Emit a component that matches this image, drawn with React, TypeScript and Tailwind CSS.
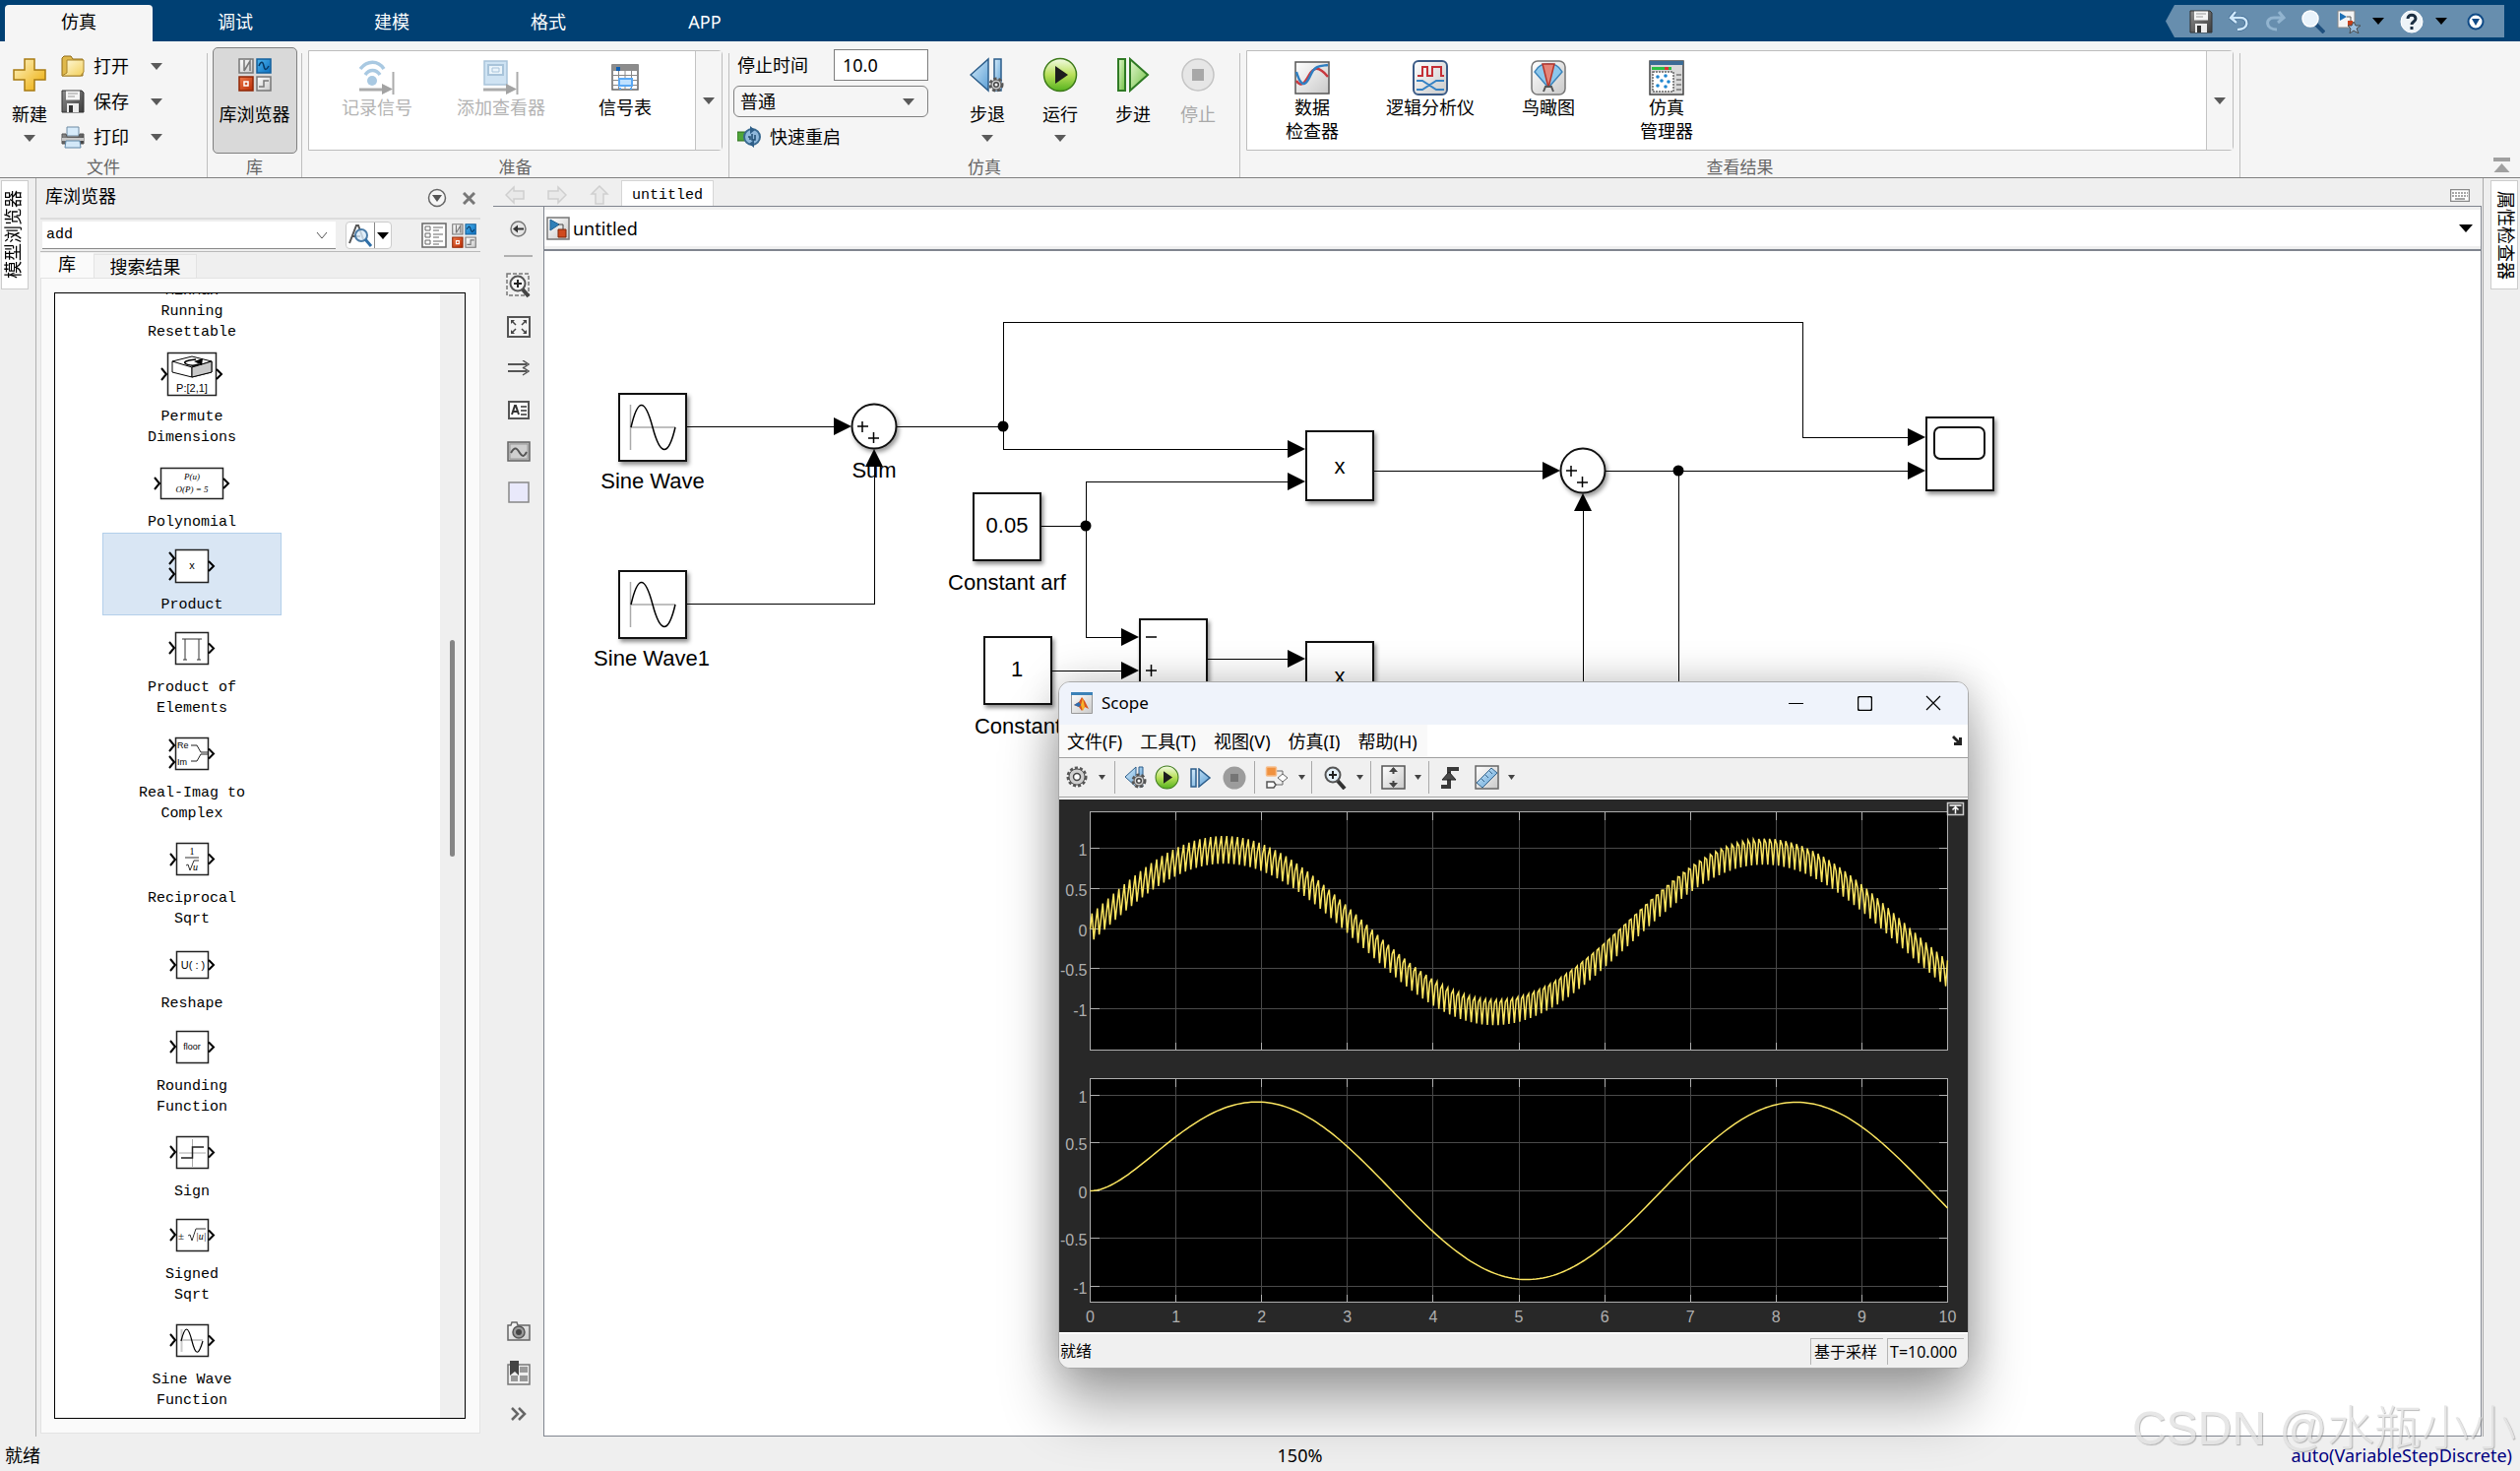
import React from "react";

const UI = "font-['Noto_Sans','Noto_Sans_CJK_SC',sans-serif]";
const SONG = "font-['Liberation_Mono','Noto_Sans_CJK_SC',monospace]";

/* ---------- shared gradients ---------- */

function Gradients() {
  const g = (id: string, a: string, b: string) => (
    <linearGradient id={id} x1="0" y1="0" x2="1" y2="1">
      <stop offset="0" stopColor={a} />
      <stop offset="1" stopColor={b} />
    </linearGradient>
  );
  return (
    <svg width="0" height="0" className="absolute" aria-hidden="true">
      <defs>
        {g("gold", "#fff6c8", "#eba900")}
        {g("folder", "#fffbe0", "#f3cf5a")}
        {g("steel", "#8d8d8d", "#3c3c3c")}
        {g("paper", "#ffffff", "#c9c9c9")}
        {g("sky", "#d5ecfa", "#5c9fd6")}
        {g("leaf", "#e4f8cf", "#6fbf42")}
        {g("red", "#ef7a4a", "#b92d06")}
        {g("blue", "#4bb4ee", "#0c6fc0")}
        <linearGradient id="run" x1="0" y1="0" x2="0" y2="1">
          <stop offset="0" stopColor="#f3fbe6" />
          <stop offset="0.5" stopColor="#b9e05a" />
          <stop offset="1" stopColor="#55b21e" />
        </linearGradient>
      </defs>
    </svg>
  );
}

type IconProps = { w: number; h: number; vb?: string; children: React.ReactNode };
function Icon({ w, h, vb, children }: IconProps) {
  return (
    <svg width={w} height={h} viewBox={vb ?? `0 0 ${w} ${h}`} fill="none" className="block shrink-0" aria-hidden="true">
      {children}
    </svg>
  );
}

function Caret({ color = "#5a5a5a" }: { color?: string }) {
  return (
    <Icon w={12} h={7}>
      <path d="M0 0h12l-6 7z" fill={color} />
    </Icon>
  );
}

function SmallCaret() {
  return (
    <Icon w={7} h={5}>
      <path d="M0 0h7l-3.500 5z" fill="#444" />
    </Icon>
  );
}

/* ---------- icons ---------- */

const PlusIcon = () => (
  <Icon w={34} h={34}>
    <path d="M12 1h10v11h11v10H22v11H12V22H1V12h11z" fill="url(#gold)" stroke="#a87b12" strokeWidth="1.500" />
  </Icon>
);
const FolderIcon = () => (
  <Icon w={24} h={22}>
    <path d="M1 21V3l2-2h7l2 3h10v17z" fill="#e0b94c" stroke="#8f6b14" />
    <path d="M1 21l5-3V5h17v12l-3 4z" fill="url(#folder)" stroke="#a8842a" />
  </Icon>
);
const FloppyIcon = () => (
  <Icon w={24} h={24}>
    <path d="M1 1h20l2 2v20H1z" fill="url(#steel)" stroke="#333" />
    <path d="M5 1.500h14v9H5z" fill="#f5f5f5" />
    <path d="M7 4h10M7 7h7" stroke="#999" />
    <path d="M6 14h12v9H6z" fill="#ececec" />
    <path d="M8 16h4v7H8z" fill="#333" />
  </Icon>
);
const PrinterIcon = () => (
  <Icon w={24} h={23}>
    <path d="M6 1h12v9H6z" fill="#d7ebfa" stroke="#6e8ba3" />
    <path d="M1 8h4l1 3h12l1-3h4v10H1z" fill="url(#steel)" stroke="#555" />
    <path d="M1 12h22v3H1z" fill="#c8c8c8" />
    <path d="M5 15h14l1 7H4z" fill="#d3e8f8" stroke="#5f87a8" />
  </Icon>
);
const LibraryIcon = ({ size = 34 }: { size?: number }) => (
  <Icon w={size} h={size} vb="0 0 34 34">
    <path d="M1 1h14v14H1z" fill="url(#paper)" stroke="#777" strokeWidth="1.500" />
    <path d="M6 2v11M6 13L12 3v10" stroke="#777" strokeWidth="1.500" />
    <path d="M19 1h14v14H19z" fill="url(#blue)" stroke="#14609c" strokeWidth="1.500" />
    <path d="M21 8c2-5 4-5 5 0s3 4 5 0" stroke="#083a66" strokeWidth="1.500" />
    <path d="M1 19h14v14H1z" fill="url(#red)" stroke="#8f2606" strokeWidth="1.500" />
    <path d="M6 24h4v4H6z" stroke="#fff" strokeWidth="1.500" />
    <path d="M19 19h14v14H19z" fill="url(#paper)" stroke="#777" strokeWidth="1.500" />
    <path d="M21 29h5v-6h5" stroke="#777" strokeWidth="1.500" />
  </Icon>
);
const RecordIcon = () => (
  <Icon w={36} h={36}>
    <g stroke="#a9c9e2" strokeWidth="3.500">
      <path d="M1 9c7-9 18-9 24 0" />
      <path d="M6 15c4-6 11-6 15 0" />
    </g>
    <circle cx="13" cy="21" r="5" fill="#a9c9e2" />
    <path d="M0 30h26" stroke="#ababab" strokeWidth="3" />
    <path d="M23 24v11l11-5.500z" fill="#a3a3a3" />
    <path d="M34.500 12v23" stroke="#ababab" strokeWidth="2" />
  </Icon>
);
const ViewerIcon = () => (
  <Icon w={36} h={36}>
    <path d="M1 1h23v24H1z" fill="#cfe3f3" stroke="#a9c4da" strokeWidth="1.500" />
    <path d="M5 5h15v10H5z" fill="#eaf4fb" stroke="#a9c4da" strokeWidth="2" />
    <path d="M9 8h7v4H9z" stroke="#a9c4da" />
    <path d="M0 30h26" stroke="#ababab" strokeWidth="3" />
    <path d="M23 24v11l11-5.500z" fill="#a3a3a3" />
    <path d="M34.500 12v23" stroke="#ababab" strokeWidth="2" />
  </Icon>
);
const SignalTableIcon = () => (
  <Icon w={28} h={36}>
    <path d="M1 5h26v25H1z" fill="#fff" stroke="#666" strokeWidth="1.500" />
    <path d="M1 5h26v6H1z" fill="#8c8c8c" />
    <path d="M5 7h4v4H5z" fill="#0d5fb4" />
    <path d="M1 15.500h26M1 20.500h26M1 25.500h26M7.500 11v19M14 11v19M20.500 11v19" stroke="#888" />
    <path d="M8 19h13v7H8z" fill="#bfe1ff" stroke="#5aa9f5" strokeWidth="2" />
    <path d="M8 29h2M19 29h2" stroke="#5aa9f5" strokeWidth="2" />
  </Icon>
);
const RestartIcon = () => (
  <Icon w={26} h={22}>
    <path d="M0 6h10v9H0z" fill="#4fa53a" stroke="#2d6e1e" />
    <circle cx="15" cy="11" r="8" fill="#8fb9dc" stroke="#37688f" strokeWidth="2" />
    <path d="M13 0l5 4-5 4zM17 14l-5 4 5 4z" fill="#2f5f88" />
    <path d="M11 11h2v3M15 8v6h3V9" stroke="#1f4c70" strokeWidth="1.500" />
  </Icon>
);
const Gear = ({ x, y, r }: { x: number; y: number; r: number }) => (
  <g>
    <circle cx={x} cy={y} r={r} stroke="#555" strokeWidth="3" strokeDasharray="3 2" fill="#ccc" />
    <circle cx={x} cy={y} r={r - 1} fill="#cfcfcf" stroke="#555" strokeWidth="1" />
    <circle cx={x} cy={y} r={r / 2.6} fill="#fff" stroke="#444" strokeWidth="1.500" />
  </g>
);
const StepBackIcon = () => (
  <Icon w={36} h={36}>
    <path d="M19 2v32L1 18z" fill="url(#sky)" stroke="#2c5d8a" strokeWidth="1.500" />
    <path d="M25 2h7v32h-7z" fill="url(#sky)" stroke="#2c5d8a" strokeWidth="1.500" />
    <Gear x={27} y={28} r={6} />
  </Icon>
);
const RunIcon = ({ size = 36 }: { size?: number }) => (
  <Icon w={size} h={size} vb="0 0 36 36">
    <circle cx="18" cy="18" r="16.500" fill="url(#run)" stroke="#3d7a1a" strokeWidth="1.500" />
    <path d="M13 9v18l13-9z" fill="#1d1d1d" />
  </Icon>
);
const StepForwardIcon = () => (
  <Icon w={36} h={36}>
    <path d="M3 2h7v32H3z" fill="url(#leaf)" stroke="#2f7a24" strokeWidth="2" />
    <path d="M15 2v32l18-16z" fill="url(#leaf)" stroke="#2f7a24" strokeWidth="2" />
  </Icon>
);
const StopIcon = () => (
  <Icon w={36} h={36}>
    <circle cx="18" cy="18" r="16" fill="#e6e6e6" stroke="#c4c4c4" strokeWidth="1.500" />
    <path d="M12 12h12v12H12z" fill="#a8a8a8" />
  </Icon>
);
const InspectorIcon = () => (
  <Icon w={36} h={36}>
    <path d="M1 2h34v32H1z" fill="url(#paper)" stroke="#555" strokeWidth="1.500" />
    <path d="M2 21c5 8 9 1 13-6s9-10 19 2" stroke="#c8393f" strokeWidth="2.500" />
    <path d="M2 12c6 20 11 11 15 2s10-8 17-9" stroke="#2f7fc2" strokeWidth="2.500" />
  </Icon>
);
const LogicIcon = () => (
  <Icon w={36} h={36}>
    <rect x="1" y="1" width="34" height="34" rx="5" fill="url(#paper)" stroke="#3a5a86" strokeWidth="2" />
    <path d="M5 16h5V7h5v9h5V7h9v9h3" stroke="#c42f36" strokeWidth="2" />
    <path d="M4 21h6l14 9h8M4 30h6l14-9h8" stroke="#3582c4" strokeWidth="2" />
  </Icon>
);
const BirdIcon = () => (
  <Icon w={36} h={36}>
    <rect x="1" y="1" width="34" height="34" rx="6" fill="url(#paper)" stroke="#777" strokeWidth="1.500" />
    <path d="M18 28L4 12c4-7 8-8 14-8s10 1 14 8z" fill="#8cc7ec" stroke="#3a83ba" strokeWidth="1.500" />
    <path d="M18 28L12 4h12z" fill="#e58478" stroke="#b5352a" strokeWidth="1.500" />
    <path d="M13 32l2-5h6l2 5" stroke="#555" strokeWidth="2" fill="#ddd" />
  </Icon>
);
const ManagerIcon = () => (
  <Icon w={36} h={36}>
    <path d="M1 1h34v34H1z" fill="#d9d9d9" stroke="#444" strokeWidth="1.500" />
    <path d="M1 1h34v4H1z" fill="#3b6c96" />
    <path d="M3 7h20v3H3z" fill="#2cbf45" />
    <path d="M16 7h4v3h-4z" fill="#d33" />
    <path d="M4 12h21v20H4z" fill="#fff" stroke="#666" strokeWidth="1.500" strokeDasharray="2 1" />
    <g fill="#1f86cf">
      <circle cx="9" cy="17" r="1.800" /><circle cx="17" cy="16" r="1.800" /><circle cx="13" cy="21" r="1.800" />
      <circle cx="20" cy="22" r="1.800" /><circle cx="9" cy="26" r="1.800" /><circle cx="17" cy="27" r="1.800" />
    </g>
    <path d="M28 15h5M28 20h5M28 25h5M28 30h5" stroke="#777" strokeWidth="1.500" />
  </Icon>
);

/* ---------- header ---------- */

function Header() {
  return (
    <header className="flex h-[42px] shrink-0 items-end bg-[#004073] pl-[5px]">
      <nav className="flex gap-[9px] text-lg">
        <button className="h-[37px] w-[150px] rounded-t bg-[#f5f5f5] pb-[3px] text-black">仿真</button>
        {["调试", "建模", "格式", "APP"].map((t) => (
          <button key={t} className="h-[37px] w-[150px] pb-[3px] text-white">
            {t}
          </button>
        ))}
      </nav>
      <div className="mr-4 mb-1 ml-auto flex h-[33px] items-center bg-[#678eae] pr-5 pl-6 [clip-path:polygon(9px_0,100%_0,100%_100%,9px_100%,0_50%)]">
        <button aria-label="Save" className="mr-4"><FloppyIcon /></button>
        <button aria-label="Undo" className="mr-4">
          <Icon w={21} h={21}>
            <path d="M7 1L2 7l6 5M3 7h9c9 0 9 12-3 12" stroke="#3f6a92" strokeWidth="4" />
            <path d="M7 1L2 7l6 5M3 7h9c9 0 9 12-3 12" stroke="#cfe8fb" strokeWidth="2.500" />
          </Icon>
        </button>
        <button aria-label="Redo" className="mr-4">
          <Icon w={21} h={21}>
            <path d="M14 1l5 6-6 5M18 7H9c-9 0-9 12 3 12" stroke="#92b4cf" strokeWidth="3" />
          </Icon>
        </button>
        <button aria-label="Find" className="mr-3">
          <Icon w={24} h={24}>
            <path d="M14 14l9 9" stroke="#1e4f7d" strokeWidth="4" />
            <circle cx="9" cy="9" r="8" fill="#e9f3fb" stroke="#fff" strokeWidth="1.500" />
          </Icon>
        </button>
        <button aria-label="Favorites" className="mr-3 flex items-center gap-3">
          <Icon w={24} h={24}>
            <path d="M1 1h17v17H1z" fill="#f4f4f4" stroke="#888" />
            <path d="M3 3l7 4-7 4z" fill="#1d6fb5" />
            <path d="M10 7h4v5" stroke="#555" />
            <path d="M11 11h5v6h-5z" fill="#c8401a" />
            <path d="M17 12l2 4h5l-4 3 2 5-5-3-4 3 1-5-3-3h4z" fill="#9cc0e0" stroke="#4b4b4b" />
          </Icon>
          <Caret color="#000" />
        </button>
        <button aria-label="Help" className="mr-5 ml-1 flex items-center gap-3">
          <Icon w={24} h={24}>
            <circle cx="12" cy="12" r="11" fill="#eef4f8" stroke="#fff" />
            <path d="M8 9c0-5 8-5 8 0 0 3-4 3-4 6M12 17v3" stroke="#1c2f42" strokeWidth="3" />
          </Icon>
          <Caret color="#000" />
        </button>
        <button aria-label="More">
          <Icon w={18} h={18}>
            <circle cx="9" cy="9" r="7.500" fill="#fff" stroke="#0f4a86" strokeWidth="2" />
            <path d="M5 6h8l-4 7z" fill="#0f4a86" />
          </Icon>
        </button>
      </div>
    </header>
  );
}

/* ---------- ribbon ---------- */

function Separator() {
  return <div className="h-[126px] w-px shrink-0 self-end bg-[#bfbfbf]" />;
}

function Group({ label, className, children }: { label: string; className: string; children: React.ReactNode }) {
  return (
    <section className={`flex shrink-0 flex-col ${className}`}>
      <div className="flex h-[117px]">{children}</div>
      <h2 className="text-center text-[17px] leading-[21px] text-[#666]">{label}</h2>
    </section>
  );
}

function FileRow({ icon, label }: { icon: React.ReactNode; label: string }) {
  return (
    <button className="flex h-9 items-center text-lg">
      {icon}
      <span className="ml-[9px]">{label}</span>
      <span className="ml-[22px]"><Caret /></span>
    </button>
  );
}

function BigButton({ icon, label, caret, muted }: { icon: React.ReactNode; label: string; caret?: boolean; muted?: boolean }) {
  return (
    <button className={`flex flex-col items-center pt-4 text-lg leading-6 ${muted ? "w-[58px] text-[#a9a9a9]" : "w-[74px]"}`}>
      {icon}
      <span className="mt-2.5">{label}</span>
      {caret && <span className="mt-[9px]"><Caret /></span>}
    </button>
  );
}

function GalleryItem({ icon, lines, muted, wide }: { icon: React.ReactNode; lines: string[]; muted?: boolean; wide?: boolean }) {
  return (
    <button className={`flex flex-col items-center pt-[9px] text-lg leading-6 ${wide ? "w-[126px]" : "w-[120px]"} ${muted ? "text-[#b3b3b3]" : ""}`}>
      {icon}
      <span className="flex flex-col whitespace-nowrap">
        {lines.map((l) => <span key={l}>{l}</span>)}
      </span>
    </button>
  );
}

function Gallery({ width, children }: { width: string; children: React.ReactNode }) {
  return (
    <div className={`mt-[9px] flex h-[102px] rounded-r border border-[#bdbdbd] bg-white ${width}`}>
      <div className="flex flex-1 items-start pl-[6px]">{children}</div>
      <button aria-label="More items" className="flex w-[27px] items-center justify-center border-l border-[#c3c3c3] bg-[#f5f5f5]">
        <Caret />
      </button>
    </div>
  );
}

function Ribbon() {
  return (
    <div className="flex h-[139px] shrink-0 border-b border-[#808080] bg-[#f5f5f5]">
      <Group label="文件" className="w-[210px]">
        <button className="flex w-[60px] flex-col items-center pt-[17px] text-lg leading-6">
          <PlusIcon />
          <span className="mt-[11px]">新建</span>
          <span className="mt-[9px]"><Caret /></span>
        </button>
        <div className="ml-0.5 flex flex-col pt-[7px]">
          <FileRow icon={<FolderIcon />} label="打开" />
          <FileRow icon={<FloppyIcon />} label="保存" />
          <FileRow icon={<PrinterIcon />} label="打印" />
        </div>
      </Group>
      <Separator />
      <Group label="库" className="w-[95px] items-center">
        <button className="mt-[6px] flex h-[108px] w-[86px] flex-col items-center rounded-[5px] border border-[#808080] bg-[#d9d9d9] pt-2.5 text-lg leading-6">
          <LibraryIcon />
          <span className="mt-[11px]">库浏览器</span>
        </button>
      </Group>
      <Separator />
      <Group label="准备" className="w-[433px] items-center">
        <Gallery width="w-[421px]">
          <GalleryItem wide muted icon={<RecordIcon />} lines={["记录信号"]} />
          <GalleryItem wide muted icon={<ViewerIcon />} lines={["添加查看器"]} />
          <GalleryItem wide icon={<SignalTableIcon />} lines={["信号表"]} />
        </Gallery>
      </Group>
      <Separator />
      <Group label="仿真" className="w-[518px]">
        <div className="ml-1 flex w-[198px] flex-col pt-2">
          <div className="flex h-8 items-center justify-between pl-1 text-lg">
            <label htmlFor="stop-time">停止时间</label>
            <input id="stop-time" defaultValue="10.0" className="h-8 w-24 border border-[#7d7d7d] bg-white px-2" />
          </div>
          <div className="mt-[5px] flex h-8 items-center rounded-md border border-[#808080] pr-[13px]">
            <select aria-label="Simulation mode" className="h-full flex-1 appearance-none bg-transparent pl-1.5 text-lg">
              <option>普通</option>
            </select>
            <Caret />
          </div>
          <button className="mt-2 flex h-6 items-center gap-[7px] pl-1 text-lg leading-6">
            <RestartIcon />
            快速重启
          </button>
        </div>
        <div className="ml-[23px] flex">
          <BigButton icon={<StepBackIcon />} label="步退" caret />
          <BigButton icon={<RunIcon />} label="运行" caret />
          <BigButton icon={<StepForwardIcon />} label="步进" />
          <BigButton icon={<StopIcon />} label="停止" muted />
        </div>
      </Group>
      <Separator />
      <Group label="查看结果" className="w-[1015px] items-center">
        <Gallery width="w-[1003px]">
          <GalleryItem icon={<InspectorIcon />} lines={["数据", "检查器"]} />
          <GalleryItem icon={<LogicIcon />} lines={["逻辑分析仪"]} />
          <GalleryItem icon={<BirdIcon />} lines={["鸟瞰图"]} />
          <GalleryItem icon={<ManagerIcon />} lines={["仿真", "管理器"]} />
        </Gallery>
      </Group>
      <Separator />
      <button aria-label="Collapse ribbon" className="mr-2.5 mb-1 ml-auto self-end">
        <Icon w={17} h={17}>
          <path d="M0 1h17v4H0z" fill="#a0a0a0" />
          <path d="M8.500 7l8 9H.5z" fill="#a0a0a0" />
        </Icon>
      </button>
    </div>
  );
}

/* ---------- library panel ---------- */

type BlockGlyph = { w: number; h: number; ports: number[]; body: React.ReactNode };
type LibraryItem = { lines: string[]; glyph: BlockGlyph; selected?: boolean };

const sqrtText = "font-['Liberation_Serif',serif] italic";

const libraryItems: LibraryItem[] = [
  { lines: ["MinMax", "Running", "Resettable"], glyph: { w: 34, h: 32, ports: [16], body: null } },
  {
    lines: ["Permute", "Dimensions"],
    glyph: {
      w: 50, h: 44, ports: [22],
      body: (
        <>
          <path d="M5 9l20-5 20 5v11L25 25 5 20zM5 9l20 6 20-6M25 15v10" stroke="#000" />
          <path d="M25 15l20-6v11l-20 5z" fill="#c8c8c8" stroke="#000" />
          <path d="M32 12c-8 3-18-1-13-3s6-1 10-2" stroke="#000" strokeWidth="1.500" />
          <path d="M27 9l9-3-1 7z" fill="#000" />
          <text x="25" y="40" fontSize="11" textAnchor="middle" fill="#000" className="font-['Liberation_Sans',sans-serif]">P:[2,1]</text>
        </>
      ),
    },
  },
  {
    lines: ["Polynomial"],
    glyph: {
      w: 64, h: 32, ports: [16],
      body: (
        <>
          <text x="32" y="12" fontSize="9" textAnchor="middle" fill="#000" className={sqrtText}>P(u)</text>
          <text x="32" y="25" fontSize="9" textAnchor="middle" fill="#000" className={sqrtText}>O(P) = 5</text>
        </>
      ),
    },
  },
  {
    lines: ["Product"],
    selected: true,
    glyph: {
      w: 34, h: 34, ports: [9, 25],
      body: <text x="17" y="20" fontSize="11" textAnchor="middle" fill="#000" className="font-['Liberation_Sans',sans-serif]">x</text>,
    },
  },
  {
    lines: ["Product of", "Elements"],
    glyph: { w: 34, h: 33, ports: [16], body: <path d="M7 7h20M10 7v21M24 7v21M8 28h4M22 28h4" stroke="#333" /> },
  },
  {
    lines: ["Real-Imag to", "Complex"],
    glyph: {
      w: 34, h: 33, ports: [8, 25],
      body: (
        <>
          <text x="2" y="11" fontSize="9" fill="#000" className="font-['Liberation_Sans',sans-serif]">Re</text>
          <text x="2" y="28" fontSize="9" fill="#000" className="font-['Liberation_Sans',sans-serif]">Im</text>
          <path d="M16 8h6l4 7h7M16 24h6l4-7h7" stroke="#222" />
        </>
      ),
    },
  },
  {
    lines: ["Reciprocal", "Sqrt"],
    glyph: {
      w: 33, h: 33, ports: [17],
      body: (
        <>
          <text x="16" y="12" fontSize="10" textAnchor="middle" fill="#000" className="font-['Liberation_Serif',serif]">1</text>
          <path d="M9 15h14M10 23l2-1 2 6 4-10h5" stroke="#333" />
          <text x="17" y="28" fontSize="10" fill="#000" className={sqrtText}>u</text>
        </>
      ),
    },
  },
  {
    lines: ["Reshape"],
    glyph: {
      w: 33, h: 28, ports: [14],
      body: <text x="17" y="18" fontSize="11" textAnchor="middle" fill="#000" className="font-['Liberation_Sans',sans-serif]">U( : )</text>,
    },
  },
  {
    lines: ["Rounding", "Function"],
    glyph: {
      w: 33, h: 33, ports: [16],
      body: <text x="16" y="19" fontSize="9" textAnchor="middle" fill="#000" className="font-['Liberation_Sans',sans-serif]">floor</text>,
    },
  },
  {
    lines: ["Sign"],
    glyph: {
      w: 33, h: 33, ports: [16],
      body: (
        <>
          <path d="M3 17h27M16.500 3v28" stroke="#aaa" />
          <path d="M5 22h11.500V11H28" stroke="#222" strokeWidth="1.500" />
        </>
      ),
    },
  },
  {
    lines: ["Signed", "Sqrt"],
    glyph: {
      w: 33, h: 33, ports: [16],
      body: (
        <>
          <text x="2" y="21" fontSize="11" fill="#000" className="font-['Liberation_Serif',serif]">±</text>
          <path d="M12 17l2-1 2 6 4-12h10" stroke="#333" />
          <text x="20" y="21" fontSize="10" fill="#000" className={sqrtText}>|u|</text>
        </>
      ),
    },
  },
  {
    lines: ["Sine Wave", "Function"],
    glyph: {
      w: 33, h: 33, ports: [16],
      body: (
        <>
          <path d="M5.500 5v23M4 16h23" stroke="#ccc" strokeWidth="2" />
          <path d="M5 17C9 1 12 1 16 17s7 14 11 0" stroke="#000" strokeWidth="1.200" />
        </>
      ),
    },
  },
];

function LibraryGlyph({ glyph }: { glyph: BlockGlyph }) {
  const { w, h, ports, body } = glyph;
  const out = h / 2;
  return (
    <svg width={w + 14} height={h + 2} viewBox={`-7 -1 ${w + 14} ${h + 2}`} fill="none" className="block" aria-hidden="true">
      <rect x="0.500" y="0.500" width={w - 1} height={h - 1} fill="#fff" stroke="#222" strokeWidth="1.500" />
      {ports.map((p) => (
        <path key={p} d={`M-6 ${p - 6}l5 6-5 6`} stroke="#000" strokeWidth="2" />
      ))}
      <path d={`M${w} ${out - 5}l5 5-5 5`} stroke="#000" strokeWidth="2" />
      {body}
    </svg>
  );
}

function LibraryEntry({ item }: { item: LibraryItem }) {
  return (
    <li className="w-[182px]">
      <button
        className={`flex w-full flex-col items-center text-[15px] leading-[21px] ${item.selected ? "bg-[#d9e6f4] outline-1 -outline-offset-1 outline-[#b3cfea]" : ""}`}
      >
        <span className={`flex h-[63px] items-center ${item.glyph.h > 40 ? "pb-1" : "pt-1"}`}>
          <LibraryGlyph glyph={item.glyph} />
        </span>
        {item.lines.map((l) => <span key={l}>{l}</span>)}
        {item.lines.length > 1 && <span className="h-0.5" />}
      </button>
    </li>
  );
}

function LibraryPanel() {
  return (
    <aside className={`flex w-[464px] shrink-0 flex-col pr-[13px] pb-[3px] pl-1 text-lg ${SONG}`}>
      <div className="flex h-10 items-center pl-[5px]">
        <h2 className="mr-auto">库浏览器</h2>
        <button aria-label="Panel menu" className="mr-4">
          <Icon w={20} h={20}>
            <circle cx="10" cy="10" r="8.500" stroke="#666" strokeWidth="1.500" fill="#f6f6f6" />
            <path d="M5 7h10l-5 7z" fill="#555" />
          </Icon>
        </button>
        <button aria-label="Close panel" className="mr-[5px]">
          <Icon w={13} h={13}>
            <path d="M1 1l11 11M12 1L1 12" stroke="#777" strokeWidth="3" />
          </Icon>
        </button>
      </div>
      <div className="flex h-[35px] items-center border-t-2 border-b border-[#dcdcdc] border-b-[#b9b9b9] pl-[2px]">
        <div className="flex h-[28px] flex-1 items-center border-b border-[#888] bg-white pt-px pr-2">
          <input aria-label="Search library" defaultValue="add" className="w-full min-w-0 flex-1 bg-transparent pl-1 text-[15px]" />
          <button aria-label="Search history">
            <Icon w={12} h={8}>
              <path d="M1 1l5 6 5-6" stroke="#555" />
            </Icon>
          </button>
        </div>
        <div className="ml-[10px] flex h-7 items-center rounded border border-[#ccc] bg-white">
          <button aria-label="Search" className="px-[1px]">
            <Icon w={26} h={24}>
              <path d="M2 20L9 2h2l5 14M5 13h8" stroke="#555" strokeWidth="2" />
              <circle cx="14" cy="12" r="6" fill="#d9ebf9" fillOpacity="0.800" stroke="#4a7ba6" strokeWidth="2" />
              <path d="M18 16l6 7" stroke="#2f6fa8" strokeWidth="3" />
            </Icon>
          </button>
          <button aria-label="Search options" className="flex h-full items-center border-l border-[#888] px-[2px]">
            <Caret color="#000" />
          </button>
        </div>
        <button aria-label="Detail view" className="ml-[30px]">
          <Icon w={26} h={26}>
            <path d="M1 1h24v24H1z" fill="#fff" stroke="#666" strokeWidth="1.500" />
            <path d="M4 4h5v4H4zM4 11h5v4H4zM4 18h5v4H4zM12 5h10M12 12h10M12 19h10M12 8h6M12 15h6M12 22h6" stroke="#666" />
          </Icon>
        </button>
        <button aria-label="Grid view" className="mr-1 ml-[5px]"><LibraryIcon size={25} /></button>
      </div>
      <div className="flex h-[26px] items-end">
        <button className="flex h-[25px] w-[54px] items-center justify-center bg-[#fafafa]">库</button>
        <button className="flex h-6 w-[105px] items-center justify-center border border-b-0 border-[#e3e3e3] bg-[#f3f3f3] pt-1">搜索结果</button>
      </div>
      <div className="flex min-h-0 flex-1 border border-[#e3e3e3] bg-[#fafafa] py-[14px] pr-[14px] pl-[13px]">
        <div className="flex min-h-0 flex-1 border border-black bg-white">
          <div className="min-h-0 flex-1 overflow-hidden pl-[48px]">
            <ul className="-mt-[76px]">
              {libraryItems.map((i) => <LibraryEntry key={i.lines.join(" ")} item={i} />)}
            </ul>
          </div>
          <div className="flex w-[25px] flex-col items-center bg-[#efefef] pt-[352px]">
            <div className="h-[220px] w-[5px] rounded-full bg-[#858585]" />
          </div>
        </div>
      </div>
    </aside>
  );
}

/* ---------- model canvas ---------- */

type Pt = [number, number];

function Head({ x, y, up }: { x: number; y: number; up?: boolean }) {
  return up ? <path d={`M${x} ${y}l9 18h-18z`} fill="#000" /> : <path d={`M${x} ${y}l-18-9v18z`} fill="#000" />;
}

function Wire({ pts }: { pts: Pt[] }) {
  return <polyline points={pts.map((p) => p.join(",")).join(" ")} stroke="#000" strokeWidth="1" shapeRendering="crispEdges" />;
}

function Box({ x, y, w = 68, h = 68, children }: { x: number; y: number; w?: number; h?: number; children?: React.ReactNode }) {
  return (
    <g>
      <rect x={x} y={y} width={w} height={h} fill="#fff" stroke="#111" strokeWidth="2" className="[filter:drop-shadow(2px_3px_2px_rgb(0_0_0/0.45))]" />
      {children}
    </g>
  );
}

function Sine({ x, y }: { x: number; y: number }) {
  return (
    <g transform={`translate(${x} ${y})`}>
      <path d="M11.500 11v46M12 34h45" stroke="#aaa" strokeWidth="1.500" />
      <path d="M12 34C19 4 26 4 34 34s16 30 23 0" stroke="#000" strokeWidth="1.500" />
    </g>
  );
}

function SumNode({ x, y }: { x: number; y: number }) {
  return (
    <g>
      <circle cx={x} cy={y} r="22.500" fill="#fff" stroke="#111" strokeWidth="2" className="[filter:drop-shadow(2px_3px_2px_rgb(0_0_0/0.4))]" />
      <path d={`M${x - 17} ${y}h11M${x - 12} ${y - 5}v11M${x - 6} ${y + 12}h11M${x - 0.5} ${y + 6}v11`} stroke="#000" strokeWidth="1.500" />
    </g>
  );
}

function T({ x, y, children }: { x: number; y: number; children: string }) {
  return <text x={x} y={y + 8} fontSize="22" textAnchor="middle" fill="#000">{children}</text>;
}

function Diagram() {
  return (
    <svg width="1960" height="1160" viewBox="554 256 1960 1160" fill="none" className="block max-w-none font-['Liberation_Sans',sans-serif]">
      <T x={664} y={489}>Sine Wave</T>
      <T x={663} y={669}>Sine Wave1</T>
      <T x={889} y={478}>Sum</T>
      <T x={1024} y={592}>Constant arf</T>
      <T x={1035} y={738}>Constant</T>

      <Wire pts={[[698, 434], [850, 434]]} />
      <Wire pts={[[698, 614], [889, 614], [889, 470]]} />
      <Wire pts={[[911, 434], [1020, 434]]} />
      <Wire pts={[[1939, 445], [1832, 445], [1832, 328], [1020, 328], [1020, 457], [1312, 457]]} />
      <Wire pts={[[1058, 535], [1104, 535]]} />
      <Wire pts={[[1312, 490], [1104, 490], [1104, 648], [1143, 648]]} />
      <Wire pts={[[1069, 682], [1143, 682]]} />
      <Wire pts={[[1226, 670], [1312, 670]]} />
      <Wire pts={[[1395, 479], [1570, 479]]} />
      <Wire pts={[[1395, 693], [1609, 693], [1609, 518]]} />
      <Wire pts={[[1631, 479], [1941, 479]]} />
      <Wire pts={[[1706, 479], [1706, 720]]} />

      <Box x={630} y={401}><Sine x={630} y={401} /></Box>
      <Box x={630} y={581}><Sine x={630} y={581} /></Box>
      <Box x={990} y={502}><T x={1024} y={534}>0.05</T></Box>
      <Box x={1001} y={648}><T x={1034} y={680}>1</T></Box>
      <Box x={1159} y={630} h={90}>
        <path d="M1165 648h11M1165 682h11M1170.500 676v12" stroke="#000" strokeWidth="1.500" />
      </Box>
      <Box x={1328} y={439} h={70}><T x={1362} y={474}>x</T></Box>
      <Box x={1328} y={653} h={70}><T x={1362} y={687}>x</T></Box>
      <Box x={1958} y={425} h={74}>
        <rect x="1966" y="435" width="51" height="32" rx="6" stroke="#111" strokeWidth="2" />
      </Box>
      <SumNode x={889} y={434} />
      <SumNode x={1609} y={479} />

      <Head x={866} y={434} />
      <Head x={889} y={457} up />
      <Head x={1327} y={457} />
      <Head x={1327} y={490} />
      <Head x={1158} y={648} />
      <Head x={1158} y={682} />
      <Head x={1327} y={670} />
      <Head x={1586} y={479} />
      <Head x={1609} y={502} up />
      <Head x={1957} y={445} />
      <Head x={1957} y={479} />
      <g fill="#000">
        <circle cx="1020" cy="434" r="5.500" />
        <circle cx="1104" cy="535" r="5.500" />
        <circle cx="1706" cy="479" r="5.500" />
      </g>
    </svg>
  );
}

/* ---------- scope window ---------- */

const AXIS_W = 871;

/* Slow sine carrying a 100 rad/s ripple, sampled about three times per ripple cycle. */
function noisyPath() {
  const h = 0.020962;
  const out: string[] = [];
  for (let k = 0; k * h <= 10; k++) {
    const t = k * h;
    const v = Math.sin(t) + 0.2 * Math.sin(100 * t);
    out.push(`${(t * AXIS_W) / 10},${943 - v * 81.5}`);
  }
  return out.join(" ");
}

/* First-order lag response to the sine. */
function filteredPath() {
  const tau = 0.4;
  const out: string[] = [];
  for (let t = 0; t <= 10.001; t += 0.04) {
    const v = (Math.sin(t) - tau * Math.cos(t) + tau * Math.exp(-t / tau)) / (1 + tau * tau);
    out.push(`${(t * AXIS_W) / 10},${1209 - v * 97}`);
  }
  return out.join(" ");
}

function Axes({ top, bottom, ys, points }: { top: number; bottom: number; ys: number[]; points: string }) {
  const labels = ["1", "0.5", "0", "-0.5", "-1"];
  const xs = [1, 2, 3, 4, 5, 6, 7, 8, 9].map((i) => Math.round(i * 87.1));
  return (
    <g>
      <rect x="0" y={top} width={AXIS_W} height={bottom - top} fill="#000" />
      <g shapeRendering="crispEdges" strokeWidth="1">
        {xs.map((x) => <path key={x} d={`M${x} ${top}V${bottom}`} stroke="#4a4a4a" />)}
        {ys.map((y) => <path key={y} d={`M0 ${y}H${AXIS_W}`} stroke="#4a4a4a" />)}
        {xs.map((x) => <path key={x} d={`M${x} ${top}v8M${x} ${bottom}v-8`} stroke="#afafaf" />)}
        {ys.map((y) => <path key={y} d={`M0 ${y}h9M${AXIS_W} ${y}h-9`} stroke="#afafaf" />)}
        <rect x="0" y={top} width={AXIS_W} height={bottom - top} stroke="#afafaf" />
      </g>
      {ys.map((y, i) => (
        <text key={y} x="-3" y={y + 7} fontSize="16" textAnchor="end" fill="#afafaf">{labels[i]}</text>
      ))}
      <polyline points={points} stroke="#fbe560" strokeWidth="1.500" />
    </g>
  );
}

function ScopePlot() {
  return (
    <div className="flex h-[541px] bg-[#282828]">
      <svg width="923" height="541" viewBox="-31.500 811.500 923 541" fill="none" className="block font-['Liberation_Sans',sans-serif]">
        <Axes top={824} bottom={1066} ys={[861, 902, 943, 983, 1024]} points={noisyPath()} />
        <Axes top={1095} bottom={1322} ys={[1112, 1160, 1209, 1257, 1306]} points={filteredPath()} />
        {[0, 1, 2, 3, 4, 5, 6, 7, 8, 9, 10].map((n) => (
          <text key={n} x={n * 87.1} y="1342" fontSize="16" textAnchor="middle" fill="#afafaf">{n}</text>
        ))}
        <rect x="871" y="815" width="16" height="12" fill="#333" stroke="#ccc" strokeWidth="1.500" />
        <path d="M873 817.500h12M879 826v-6M876 822l3-3 3 3" stroke="#fff" strokeWidth="1.500" />
      </svg>
    </div>
  );
}

function ToolSep() {
  return <div className="h-[33px] w-px bg-[#a8a8a8]" />;
}

function ScopeToolbar() {
  return (
    <div className="flex h-[39px] items-center bg-[#f0f0f0] pl-[7px]">
      <button aria-label="Configuration" className="mr-[9px] flex w-[40px] items-center justify-between">
        <Icon w={23} h={23}><Gear x={11} y={11} r={9} /></Icon>
        <SmallCaret />
      </button>
      <ToolSep />
      <button aria-label="Step back" className="ml-[9px]">
        <Icon w={23} h={23}>
          <path d="M12 1v20L1 11zM15 1h4v20h-4z" fill="url(#sky)" stroke="#2c5d8a" />
          <Gear x={15} y={15} r={6} />
        </Icon>
      </button>
      <button aria-label="Run" className="ml-2"><RunIcon size={25} /></button>
      <button aria-label="Step forward" className="ml-[11px]">
        <Icon w={22} h={20}>
          <path d="M1 1h5v18H1zM9 1v18l11-9z" fill="url(#sky)" stroke="#2c5d8a" strokeWidth="1.500" />
        </Icon>
      </button>
      <button aria-label="Stop" className="mr-[8px] ml-[11px]">
        <Icon w={24} h={24}>
          <circle cx="12" cy="12" r="11.500" fill="#9c9c9c" />
          <path d="M8 8h8v8H8z" fill="#757575" />
        </Icon>
      </button>
      <ToolSep />
      <button aria-label="Highlight block" className="mr-[6px] ml-[10px] flex w-[41px] items-center justify-between">
        <Icon w={25} h={24}>
          <path d="M12 5h6v4M11 19h7v-4" stroke="#666" />
          <rect x="1.500" y="1" width="10" height="9" rx="1" fill="#f0913e" stroke="#f6bd8a" strokeWidth="1.500" />
          <path d="M18 8l5 4-5 4-5-4z" fill="#fff" stroke="#666" />
          <path d="M2 16h7l2 3-2 3H2z" fill="#fff" stroke="#555" strokeWidth="1.500" />
        </Icon>
        <SmallCaret />
      </button>
      <ToolSep />
      <button aria-label="Zoom" className="mr-[7px] ml-[11px] flex w-[41px] items-center justify-between">
        <Icon w={24} h={24}>
          <path d="M14 14l8 9" stroke="#333" strokeWidth="4" />
          <circle cx="10" cy="9" r="7.500" fill="#e4f0f8" stroke="#555" strokeWidth="2" />
          <path d="M6 9h8M10 5v8" stroke="#222" strokeWidth="2" />
        </Icon>
        <SmallCaret />
      </button>
      <ToolSep />
      <button aria-label="Scale axes" className="mr-[7px] ml-[10px] flex w-[41px] items-center justify-between">
        <Icon w={25} h={25}>
          <path d="M1 1h23v23H1z" fill="url(#paper)" stroke="#555" strokeWidth="1.500" />
          <path d="M12.500 3v6M12.500 22v-6" stroke="#444" strokeWidth="2" />
          <path d="M8 7l4.500-5L17 7zM8 18l4.500 5 4.500-5z" fill="#444" />
        </Icon>
        <SmallCaret />
      </button>
      <ToolSep />
      <button aria-label="Triggers" className="ml-[10px]">
        <Icon w={22} h={23}>
          <path d="M2 21h8V3h10" stroke="#3a3a3a" strokeWidth="4" />
          <path d="M3 14l7-8 7 8z" fill="#4a4a4a" stroke="#222" />
        </Icon>
      </button>
      <button aria-label="Measurements" className="ml-3.5 flex w-[41px] items-center justify-between">
        <Icon w={25} h={25}>
          <path d="M1 1h23v23H1z" fill="url(#paper)" stroke="#666" strokeWidth="1.500" />
          <path d="M2 18L17 3l6 5L8 23z" fill="url(#sky)" stroke="#33648d" />
          <path d="M7 14l3 3M11 10l3 3M15 6l3 3" stroke="#33648d" />
        </Icon>
        <SmallCaret />
      </button>
    </div>
  );
}

function ScopeWindow() {
  return (
    <section
      aria-label="Scope"
      className="absolute top-[437px] left-[522px] z-10 flex w-[925px] flex-col overflow-hidden rounded-xl border border-[#a9a9a9] bg-[#f0f0f0] shadow-[0_0_40px_rgba(0,0,0,0.22),0_40px_60px_rgba(0,0,0,0.32)]"
    >
      <div className="flex h-[43px] items-center bg-[#eff3fb] pb-px pl-3 text-[17px]">
        <Icon w={22} h={22}>
          <path d="M.5.5h21v21H.5z" fill="url(#paper)" stroke="#999" />
          <path d="M0 0h22v3H0z" fill="#3b82b8" />
          <path d="M3 13l5-3 3-5 3 4 4 8-4-2-3 4-3-4z" fill="#d9541e" />
          <path d="M3 13l5-3 2 3-2 2z" fill="#2e6db0" />
          <path d="M12 6l-2 7 2 6 2-4z" fill="#f7b32b" />
        </Icon>
        <h2 className="mr-auto ml-[9px]">Scope</h2>
        <button aria-label="Minimize" className="flex h-full w-[70px] items-center justify-center">
          <Icon w={15} h={15}><path d="M0 7.500h15" stroke="#000" /></Icon>
        </button>
        <button aria-label="Maximize" className="flex h-full w-[70px] items-center justify-center">
          <Icon w={15} h={15}><rect x="0.500" y="0.500" width="14" height="14" rx="2" stroke="#000" strokeWidth="1.500" /></Icon>
        </button>
        <button aria-label="Close" className="flex h-full w-[70px] items-center justify-center">
          <Icon w={16} h={16}><path d="M1 1l14 14M15 1L1 15" stroke="#000" strokeWidth="1.200" /></Icon>
        </button>
      </div>
      <div className="flex h-[34px] items-center justify-between border-b border-[#a0a0a0] bg-white pr-[5px]">
        <nav className="flex h-full items-center gap-[18px] bg-[#f9f9f9] pr-[10px] pl-2 text-lg">
          {["文件(F)", "工具(T)", "视图(V)", "仿真(I)", "帮助(H)"].map((m) => <button key={m}>{m}</button>)}
        </nav>
        <button aria-label="Dock window">
          <Icon w={11} h={11}>
            <path d="M0 2l2-2 5 5V2h3v8H2V7h3z" fill="#222" />
          </Icon>
        </button>
      </div>
      <ScopeToolbar />
      <div className="h-[3px] border-t border-[#a0a0a0] bg-white" />
      <ScopePlot />
      <div className="flex h-9 items-center gap-1 border-t-2 border-white bg-[#f0f0f0] pr-1 text-base">
        <span className="mr-auto pl-px">就绪</span>
        <span className="flex h-[27px] w-[74px] items-center border-t border-l border-[#b5b5b5] pl-[3px]">基于采样</span>
        <span className="flex h-[27px] w-[78px] items-center border-t border-l border-[#b5b5b5] pl-0.5">T=10.000</span>
      </div>
    </section>
  );
}

/* ---------- editor ---------- */

const paletteTop: { name: string; icon: React.ReactNode }[] = [
  {
    name: "Zoom region",
    icon: (
      <Icon w={26} h={26}>
        <path d="M1 1h22v22H1z" stroke="#777" strokeDasharray="4 2" strokeWidth="1.500" />
        <circle cx="12" cy="11" r="7.500" fill="#f4f4f4" stroke="#555" strokeWidth="2" />
        <path d="M8 11h8M12 7v8" stroke="#222" strokeWidth="2" />
        <path d="M17 17l6 7" stroke="#444" strokeWidth="4" />
      </Icon>
    ),
  },
  {
    name: "Fit to view",
    icon: (
      <Icon w={24} h={22}>
        <path d="M1 1h22v20H1z" fill="#f4f4f4" stroke="#555" strokeWidth="2" />
        <path d="M4 8V4h4zM20 8V4h-4zM4 14v4h4zM20 14v4h-4z" fill="#444" />
        <path d="M5 5l4 4M19 5l-4 4M5 17l4-4M19 17l-4-4" stroke="#444" strokeWidth="1.500" />
      </Icon>
    ),
  },
  {
    name: "Signal lines",
    icon: (
      <Icon w={22} h={16}>
        <path d="M0 4h19M0 11h19" stroke="#555" strokeWidth="2" />
        <path d="M15 0l6 4-6 4M15 7l6 4-6 4" stroke="#555" strokeWidth="1.500" />
      </Icon>
    ),
  },
  {
    name: "Annotation",
    icon: (
      <Icon w={22} h={19}>
        <path d="M1 1h20v17H1z" fill="#fff" stroke="#555" strokeWidth="2" />
        <path d="M4 14l3-9h1l3 9M5 11h5" stroke="#333" strokeWidth="2" />
        <path d="M13 6h6M13 10h6M13 14h6" stroke="#333" strokeWidth="1.500" />
      </Icon>
    ),
  },
  {
    name: "Image",
    icon: (
      <Icon w={24} h={21}>
        <path d="M1 1h22v19H1z" fill="#bdbdbd" stroke="#666" strokeWidth="1.500" />
        <path d="M3 3h18v15H3z" fill="#cfcfcf" stroke="#999" />
        <path d="M4 12c4-7 6-5 9 0s5 3 7-1" stroke="#555" strokeWidth="2" />
      </Icon>
    ),
  },
  {
    name: "Area",
    icon: (
      <Icon w={22} h={22}>
        <path d="M1 1h20v20H1z" fill="#e9e9fb" stroke="#888" strokeWidth="1.500" />
      </Icon>
    ),
  },
];

function Palette() {
  return (
    <div className="flex w-[51px] shrink-0 flex-col items-center pb-0.5">
      <button aria-label="Hide browser" className="mt-[14px]">
        <Icon w={17} h={17}>
          <circle cx="8.500" cy="8.500" r="7.500" fill="#e6e6e6" stroke="#777" strokeWidth="1.500" />
          <path d="M3 8.500l5-4v3h6v2H8v3z" fill="#333" />
        </Icon>
      </button>
      <div className="mt-[18px] h-0.5 w-[29px] bg-[#b0b0b0]" />
      <div className="mt-2 flex flex-col">
        {paletteTop.map((p) => (
          <button key={p.name} aria-label={p.name} className="flex h-[42px] w-8 items-center justify-center">
            {p.icon}
          </button>
        ))}
      </div>
      <div className="mt-auto flex flex-col">
        <button aria-label="Screenshot" className="flex h-[42px] w-8 items-center justify-center">
          <Icon w={24} h={20}>
            <path d="M1 4h3l1-3h5l1 3h12v15H1z" fill="url(#paper)" stroke="#666" strokeWidth="1.500" />
            <circle cx="12" cy="11" r="6" fill="#999" stroke="#555" strokeWidth="1.500" />
            <circle cx="12" cy="11" r="3" fill="#444" />
          </Icon>
        </button>
        <button aria-label="Viewmarks" className="flex h-[42px] w-8 items-center justify-center">
          <Icon w={24} h={25}>
            <path d="M1 4h22v20H1z" fill="#eee" stroke="#777" strokeWidth="1.500" />
            <path d="M13 6h8v6h-8zM13 15h8v6h-8zM4 15h7v6H4z" fill="#999" />
            <path d="M3 0h9v15l-4-4-5 4z" fill="#444" />
          </Icon>
        </button>
        <button aria-label="Expand palette" className="flex h-[42px] w-8 items-center justify-center">
          <Icon w={16} h={14}>
            <path d="M1 1l6 6-6 6M8 1l6 6-6 6" stroke="#666" strokeWidth="2.500" />
          </Icon>
        </button>
      </div>
    </div>
  );
}

function NavArrow({ d, label }: { d: string; label: string }) {
  return (
    <button aria-label={label}>
      <Icon w={20} h={20}><path d={d} fill="#e9e9e9" stroke="#cfcfcf" strokeWidth="1.500" /></Icon>
    </button>
  );
}

function Editor() {
  return (
    <main className="flex min-w-0 flex-1 flex-col">
      <div className="flex h-[29px] items-end border-b border-[#80858f] pl-3">
        <div className="mb-[1px] flex gap-[23px]">
          <NavArrow label="Back" d="M1 10l8-8v4h10v8H9v4z" />
          <NavArrow label="Forward" d="M19 10l-8-8v4H1v8h10v4z" />
          <NavArrow label="Up" d="M10 1l8 8h-4v10H6V9H2z" />
        </div>
        <button className={`ml-[12px] h-[26px] w-[94px] border border-b-0 border-[#d5d5d5] bg-white pt-1 text-[15px] leading-5 ${SONG}`}>untitled</button>
        <button aria-label="Keyboard shortcuts" className="mr-3 mb-1 ml-auto">
          <Icon w={20} h={13}>
            <path d="M.5.5h19v12H.5z" fill="#fff" stroke="#8a8a8a" strokeWidth="1.500" />
            <path d="M2 4h16M2 7h16" stroke="#8a8a8a" strokeDasharray="2 1" strokeWidth="1.500" />
            <path d="M5 10h10" stroke="#8a8a8a" strokeWidth="1.500" />
          </Icon>
        </button>
      </div>
      <div className="flex min-h-0 flex-1">
        <Palette />
        <div className="flex min-w-0 flex-1 flex-col border-r border-b border-l border-[#80858f]">
          <div className="flex h-[45px] shrink-0 items-center justify-between border-b-2 border-[#80858f] bg-[#efefef]">
            <div className="flex h-[37px] w-full items-center bg-white pr-2 pl-0.5">
              <Icon w={24} h={24}>
                <path d="M1 1h22v22H1z" fill="url(#paper)" stroke="#777" strokeWidth="1.500" />
                <path d="M4 3l9 5-9 6z" fill="#2f7fb8" stroke="#1d5f92" />
                <path d="M12 8h5v5" stroke="#444" />
                <path d="M12 13h8v8h-8z" fill="#d04a1e" stroke="#7d2408" />
              </Icon>
              <span className="mr-auto ml-[3px] text-lg">untitled</span>
              <button aria-label="Model history">
                <Icon w={14} h={8}><path d="M0 0h14l-7 8z" fill="#000" /></Icon>
              </button>
            </div>
          </div>
          <div className="relative min-h-0 flex-1 bg-white">
            <Diagram />
            <ScopeWindow />
          </div>
        </div>
      </div>
    </main>
  );
}

/* ---------- page ---------- */

function StatusBar() {
  return (
    <footer className="flex h-[35px] shrink-0 items-center bg-[#efefef] px-[5px] pt-0.5 text-lg leading-6">
      <span className="flex-1">就绪</span>
      <span className="mr-9 ml-[120px]">150%</span>
      <a href="#solver" className="flex-1 pr-[3px] text-right text-[#00007f]">auto(VariableStepDiscrete)</a>
    </footer>
  );
}

export default function App() {
  return (
    <div className={`relative flex h-screen flex-col overflow-hidden bg-[#efefef] text-black ${UI}`}>
      <Gradients />
      <Header />
      <Ribbon />
      <div className="flex min-h-0 flex-1">
        <div className={`w-[37px] shrink-0 border-r border-[#b0b0b0] pt-0.5 pl-px text-lg ${SONG}`}>
          <button className="flex h-[111px] w-7 rotate-180 items-center justify-center border border-[#ccc] bg-white leading-6 [text-orientation:sideways] [writing-mode:vertical-rl]">
            模型浏览器
          </button>
        </div>
        <LibraryPanel />
        <Editor />
        <div className={`ml-px w-[38px] shrink-0 border-l border-[#aaa] pt-0.5 pl-[7px] text-lg ${SONG}`}>
          <button className="flex h-[111px] w-7 items-center justify-center border border-[#ccc] bg-white leading-6 [text-orientation:sideways] [writing-mode:vertical-rl]">
            属性检查器
          </button>
        </div>
      </div>
      <StatusBar />
      <div className="pointer-events-none absolute right-1 bottom-2 text-5xl leading-[70px] text-[#dedede] font-['Liberation_Sans','Noto_Sans_CJK_SC',sans-serif] font-light [text-shadow:1px_1px_1px_rgb(120_120_120/0.7)] opacity-70">
        CSDN @水瓶小小
      </div>
    </div>
  );
}
